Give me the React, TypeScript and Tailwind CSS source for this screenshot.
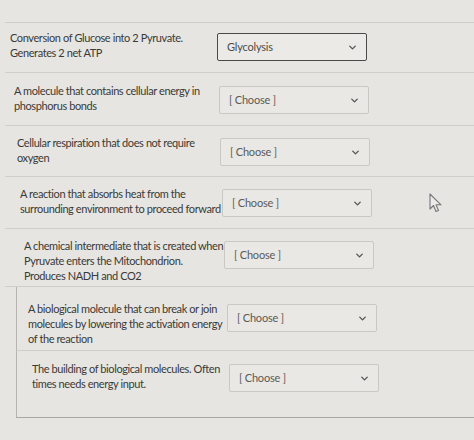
import { ChevronDown } from 'lucide-react'

type Row = {
  text: string[]
  value: string
  selected?: boolean
  cls: string
  textCls: string
}

const rows: Row[] = [
  {
    text: ['Conversion of Glucose into 2 Pyruvate.', 'Generates 2 net ATP'],
    value: 'Glycolysis',
    selected: true,
    cls: 'h-[50px] pt-[7px] pl-[5px]',
    textCls: 'w-[207px]',
  },
  {
    text: ['A molecule that contains cellular energy in', 'phosphorus bonds'],
    value: '[ Choose ]',
    cls: 'h-[53px] pt-[10px] pl-[9px]',
    textCls: 'w-[205px]',
  },
  {
    text: ['Cellular respiration that does not require', 'oxygen'],
    value: '[ Choose ]',
    cls: 'h-[51px] pt-[9px] pl-[12px]',
    textCls: 'w-[203px]',
  },
  {
    text: ['A reaction that absorbs heat from the', 'surrounding environment to proceed forward'],
    value: '[ Choose ]',
    cls: 'h-[52px] pt-[9px] pl-[15px]',
    textCls: 'w-[202px]',
  },
  {
    text: [
      'A chemical intermediate that is created when',
      'Pyruvate enters the Mitochondrion.',
      'Produces NADH and CO2',
    ],
    value: '[ Choose ]',
    cls: 'h-[58px] pt-[9px] pl-[19px]',
    textCls: 'w-[200px]',
  },
  {
    text: [
      'A biological molecule that can break or join',
      'molecules by lowering the activation energy',
      'of the reaction',
    ],
    value: '[ Choose ]',
    cls: 'h-[64px] pt-[14px] pl-[11px] ml-[11px] border-l border-l-[#b5b4b0]',
    textCls: 'w-[199px]',
  },
  {
    text: ['The building of biological molecules. Often', 'times needs energy input.'],
    value: '[ Choose ]',
    cls: 'h-[66px] pt-[10px] pl-[15px] ml-[11px] border-l border-l-[#b5b4b0]',
    textCls: 'w-[197px]',
  },
]

function Select({ value, selected }: { value: string; selected?: boolean }) {
  return (
    <div
      className={`w-[150px] h-[28px] mt-[3px] shrink-0 flex items-center justify-between pl-[9px] pr-[8px] rounded-[2px] ${
        selected
          ? 'border-[1.5px] border-[#4a4a48] bg-[#eceae6] text-[#4c4c4a]'
          : 'border border-[#c9c8c3] bg-[#e9e8e4] text-[#5a5a58]'
      }`}
    >
      <span className="text-[11px] tracking-[-0.2px]">{value}</span>
      <ChevronDown className="w-[11px] h-[11px] text-[#555]" strokeWidth={3} />
    </div>
  )
}

export default function App() {
  return (
    <div
      className="relative w-[474px] h-[440px] overflow-hidden bg-[#e6e5e1] text-[#3a3a38]"
      style={{ fontFamily: 'Lato, "Open Sans", sans-serif' }}
    >
      <div className="h-[22px]" />
      <div className="border-t border-[#cfcecb] ml-[5px]">
        {rows.map((row, i) => (
          <div
            key={i}
            className={`flex items-start ${row.cls} ${
              i < rows.length - 1 ? 'border-b border-b-[#cfcecb]' : ''
            }`}
          >
            <div
              className={`${row.textCls} shrink-0 text-[11px] leading-[15px] tracking-[-0.4px]`}
            >
              {row.text.map((t, j) => (
                <div key={j} className="whitespace-nowrap">
                  {t}
                </div>
              ))}
            </div>
            <Select value={row.value} selected={row.selected} />
          </div>
        ))}
      </div>
      <div className="ml-[16px] border-t border-[#a9a8a4]" />

      <svg
        className="absolute left-[428px] top-[192px]"
        width="16"
        height="22"
        viewBox="0 0 16 22"
        fill="none"
      >
        <path
          d="M2 2 L2 17 L5.5 13.5 L8 19.5 L10.5 18.5 L8 12.8 L13 12.8 Z"
          stroke="#77767a"
          strokeWidth="1.1"
          strokeLinejoin="round"
          fill="#ecebe8"
        />
      </svg>
    </div>
  )
}
